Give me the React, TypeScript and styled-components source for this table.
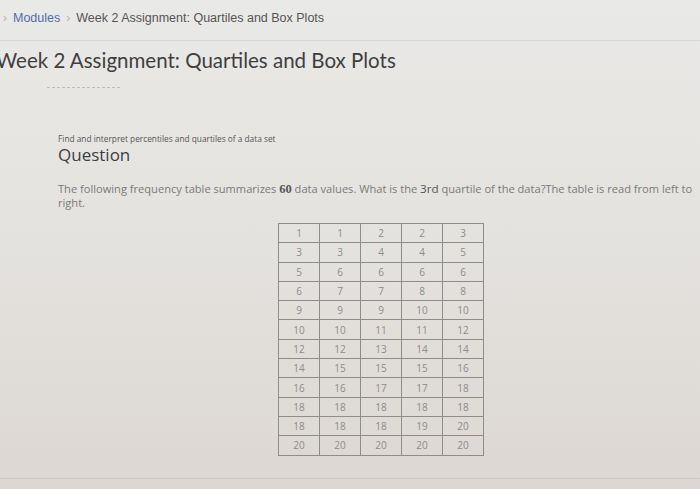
import React from 'react';
import styled, { createGlobalStyle } from 'styled-components';

const rows: number[][] = [
  [1, 1, 2, 2, 3],
  [3, 3, 4, 4, 5],
  [5, 6, 6, 6, 6],
  [6, 7, 7, 8, 8],
  [9, 9, 9, 10, 10],
  [10, 10, 11, 11, 12],
  [12, 12, 13, 14, 14],
  [14, 15, 15, 15, 16],
  [16, 16, 17, 17, 18],
  [18, 18, 18, 18, 18],
  [18, 18, 18, 19, 20],
  [20, 20, 20, 20, 20],
];

const GlobalStyle = createGlobalStyle`
  html, body {
    margin: 0;
    padding: 0;
  }
  body {
    width: 700px;
    height: 489px;
    overflow: hidden;
    background: linear-gradient(180deg, #e9e9e7 0%, #e4e2df 50%, #dcd7d2 100%);
  }
`;

function App() {
  return (
    <Page>
      <GlobalStyle />
      <Breadcrumbs>
        <Chevron>›</Chevron>
        <Crumb>Modules</Crumb>
        <Chevron>›</Chevron>
        <Current>Week 2 Assignment: Quartiles and Box Plots</Current>
      </Breadcrumbs>
      <Title>Week 2 Assignment: Quartiles and Box Plots</Title>
      <Dashes />
      <QuestionBlock>
        <Topic>Find and interpret percentiles and quartiles of a data set</Topic>
        <QuestionHeader>Question</QuestionHeader>
        <Prompt>
          The following frequency table summarizes <MathNum>60</MathNum> data values. What is the{' '}
          <Ordinal>3rd</Ordinal> quartile of the data?The table is read from left to right.
        </Prompt>
        <TableWrap>
          <DataTable>
            <tbody>
              {rows.map((row, i) => (
                <tr key={i}>
                  {row.map((v, j) => (
                    <Cell key={j}>{v}</Cell>
                  ))}
                </tr>
              ))}
            </tbody>
          </DataTable>
        </TableWrap>
      </QuestionBlock>
      <BottomRule />
    </Page>
  );
}

export default App;

const Page = styled.div`
  width: 700px;
  height: 489px;
  overflow: hidden;
  position: relative;
`

const Breadcrumbs = styled.div`
  height: 41px;
  padding: 11px 0 0 3px;
  box-sizing: border-box;
  display: flex;
  align-items: baseline;
  gap: 6px;
  font-family: "Liberation Sans", Arial, sans-serif;
  font-size: 12.5px;
  border-bottom: 1px solid #d6d6d4;
`

const Chevron = styled.span`
  color: #b3b3b3;
  font-size: 12px;
`

const Crumb = styled.span`
  color: #4e6ea8;
`

const Current = styled.span`
  color: #555;
`

const Title = styled.h1`
  margin: 6px 0 0 -4px;
  font-family: Lato, "Open Sans", sans-serif;
  font-weight: 400;
  font-size: 20.5px;
  line-height: 26px;
  color: #3f3f3f;
  white-space: nowrap;
`

const Dashes = styled.div`
  margin: 14px 0 0 47px;
  width: 73px;
  border-top: 1px dashed #bdbdbd;
`

const QuestionBlock = styled.div`
  padding: 45px 0 0 58px;
`

const Topic = styled.div`
  font-family: "Open Sans", sans-serif;
  font-size: 8.3px;
  color: #555;
  line-height: 11px;
`

const QuestionHeader = styled.h2`
  margin: 0;
  font-family: "Open Sans", sans-serif;
  font-weight: 400;
  font-size: 17px;
  line-height: 22px;
  color: #3e3e3e;
`

const Prompt = styled.p`
  margin: 16px 0 0;
  width: 645px;
  font-family: "Open Sans", sans-serif;
  font-size: 11.1px;
  line-height: 14px;
  color: #7a7a7a;
`

const MathNum = styled.span`
  font-family: "Liberation Serif", serif;
  font-weight: 700;
  font-size: 12.5px;
  line-height: 1;
  color: #555;
`

const Ordinal = styled.span`
  font-size: 11.6px;
  line-height: 1;
  color: #555;
`

const TableWrap = styled.div`
  margin: 13px 0 0 220px;
`

const DataTable = styled.table`
  border-collapse: collapse;
  border: 1.5px solid #8a8886;
`

const Cell = styled.td`
  width: 40px;
  height: 18.3px;
  padding: 0;
  border: 1px solid #8f8d8b;
  text-align: center;
  font-family: "Open Sans", sans-serif;
  font-size: 10px;
  color: #8c8c8c;
`

const BottomRule = styled.div`
  position: absolute;
  left: 0;
  right: 0;
  top: 478px;
  border-top: 1px solid #cdc8c3;
`
